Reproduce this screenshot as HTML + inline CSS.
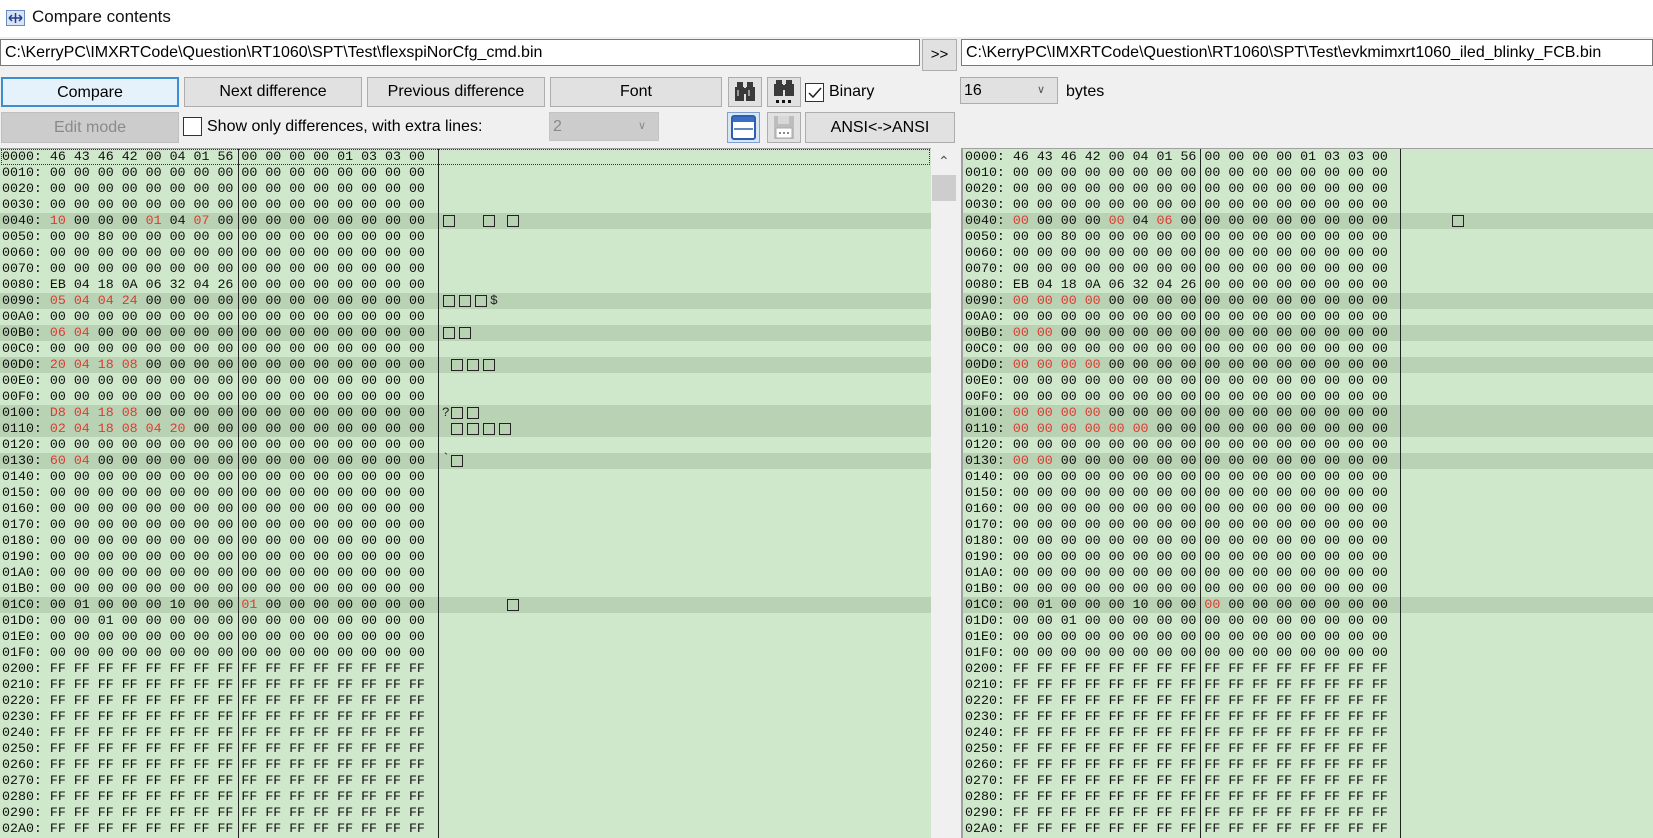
<!DOCTYPE html>
<html><head><meta charset="utf-8"><style>
*{margin:0;padding:0;box-sizing:border-box}
body{width:1653px;height:838px;overflow:hidden;background:#f0f0f0;font-family:"Liberation Sans",sans-serif;position:relative}
.a{position:absolute}
.title{left:0;top:0;width:1653px;height:37px;background:#fff}
.title span{position:absolute;left:32px;top:7px;font-size:17px;color:#111}
.inp{background:#fff;border:1px solid #7a7a7a;font-size:16px;line-height:25px;padding-left:4px;color:#000;white-space:nowrap;overflow:hidden}
.btn{background:#e1e1e1;border:1px solid #adadad;font-size:16px;color:#000;text-align:center}
.chk{width:19px;height:19px;border:1px solid #333;background:#fff}
.lbl{font-size:16px;color:#000;white-space:nowrap}
.panel{background:#cfe7ca;overflow:hidden}
.rows{position:absolute;left:0;top:0;font-family:"Liberation Mono",monospace;font-size:13.3px;color:#111}
.r{height:16px;line-height:16px;width:1000px;padding-left:2px;white-space:pre}
.h{background:#bad2b4}
.rd{color:#e03a30}
.sep{position:absolute;top:0;width:1px;height:700px;background:#222}
.box{position:absolute;width:12px;height:12px;border:1.3px solid #222}
.ch{position:absolute;font-family:"Liberation Mono",monospace;font-size:13px;color:#222}
</style></head><body>
<div class="a title">
<svg class="a" style="left:6px;top:10px" width="19" height="16" viewBox="0 0 19 16"><rect x="0.5" y="0.5" width="18" height="15" fill="#d8e4f4" stroke="#6a8ac0"/><path d="M3 8H16M3 8l3-3M3 8l3 3M16 8l-3-3M16 8l-3 3M9.5 3v10" stroke="#1f3f8a" stroke-width="1.5" fill="none"/></svg>
<span>Compare contents</span></div>

<div class="a inp" style="left:0;top:39px;width:920px;height:27px">C:\KerryPC\IMXRTCode\Question\RT1060\SPT\Test\flexspiNorCfg_cmd.bin</div>
<div class="a btn" style="left:922px;top:39px;width:35px;height:32px;line-height:30px;font-size:15px">&gt;&gt;</div>
<div class="a inp" style="left:961px;top:39px;width:692px;height:27px">C:\KerryPC\IMXRTCode\Question\RT1060\SPT\Test\evkmimxrt1060_iled_blinky_FCB.bin</div>

<div class="a btn" style="left:1px;top:77px;width:178px;height:30px;line-height:28px;border:2px solid #3c8ed0;background:#e5f1fb">Compare</div>
<div class="a btn" style="left:184px;top:77px;width:178px;height:30px;line-height:28px">Next difference</div>
<div class="a btn" style="left:367px;top:77px;width:178px;height:30px;line-height:28px">Previous difference</div>
<div class="a btn" style="left:550px;top:77px;width:172px;height:30px;line-height:28px">Font</div>
<div class="a btn" style="left:728px;top:77px;width:34px;height:30px"><svg width="32" height="28" viewBox="0 0 32 28"><g fill="#3a3a3a"><rect x="8" y="4" width="6" height="6"/><rect x="18" y="4" width="6" height="6"/><rect x="6" y="9" width="9" height="14"/><rect x="17" y="9" width="9" height="14"/><rect x="14" y="10" width="4" height="6"/></g><rect x="8" y="12" width="2" height="6" fill="#999"/><rect x="19" y="12" width="2" height="6" fill="#999"/></svg></div>
<div class="a btn" style="left:767px;top:77px;width:34px;height:30px"><svg width="32" height="28" viewBox="0 0 32 28"><g fill="#3a3a3a"><rect x="8" y="2" width="6" height="5"/><rect x="18" y="2" width="6" height="5"/><rect x="6" y="6" width="9" height="12"/><rect x="17" y="6" width="9" height="12"/><rect x="14" y="7" width="4" height="5"/></g><g fill="#111"><rect x="8" y="22" width="3" height="3"/><rect x="14" y="22" width="3" height="3"/><rect x="20" y="22" width="3" height="3"/></g></svg></div>
<div class="a chk" style="left:805px;top:83px"><svg width="17" height="17" viewBox="0 0 17 17"><path d="M3 9l4 4 8-9" stroke="#222" stroke-width="1.5" fill="none"/></svg></div>
<div class="a lbl" style="left:829px;top:83px">Binary</div>
<div class="a" style="left:960px;top:77px;width:98px;height:27px;background:#e1e1e1;border:1px solid #adadad;font-size:16px;line-height:25px;padding-left:3px">16<span style="position:absolute;left:76px;top:0;font-size:11px;color:#555">&#8744;</span></div>
<div class="a lbl" style="left:1066px;top:83px">bytes</div>

<div class="a btn" style="left:1px;top:112px;width:178px;height:31px;line-height:29px;color:#8a8a8a;background:#cccccc;border-color:#bfbfbf">Edit mode</div>
<div class="a chk" style="left:183px;top:117px"></div>
<div class="a lbl" style="left:207px;top:118px">Show only differences, with extra lines:</div>
<div class="a" style="left:549px;top:112px;width:110px;height:29px;background:#cccccc;border:1px solid #c4c4c4;font-size:16px;line-height:27px;padding-left:3px;color:#8a8a8a">2<span style="position:absolute;left:88px;top:0;font-size:11px">&#8744;</span></div>
<div class="a" style="left:727px;top:112px;width:33px;height:31px;background:#dbe6f4;border:1px solid #7d9fd1"><svg width="31" height="29" viewBox="0 0 31 29"><rect x="4" y="3" width="23" height="23" rx="2" fill="#fff" stroke="#2e5fae" stroke-width="2"/><rect x="5" y="4" width="21" height="5" fill="#3a6fc4"/><line x1="6" y1="16" x2="25" y2="16" stroke="#2e5fae" stroke-width="1.5"/></svg></div>
<div class="a btn" style="left:767px;top:112px;width:34px;height:31px"><svg width="32" height="29" viewBox="0 0 32 29"><rect x="6" y="3" width="20" height="23" fill="#bdbdbd"/><rect x="10" y="3" width="11" height="8" fill="#d8d8d8"/><rect x="8" y="15" width="16" height="10" fill="#fff" stroke="#aaa"/><g fill="#888"><rect x="11" y="19" width="2" height="2"/><rect x="15" y="19" width="2" height="2"/><rect x="19" y="19" width="2" height="2"/></g></svg></div>
<div class="a btn" style="left:805px;top:112px;width:150px;height:31px;line-height:29px">ANSI&lt;-&gt;ANSI</div>

<!-- left panel -->
<div class="a panel" style="left:0;top:148px;width:931px;height:690px;border-top:1px solid #a0a0a0">
<div class="rows"><div class="r">0000: 46 43 46 42 00 04 01 56 00 00 00 00 01 03 03 00</div><div class="r">0010: 00 00 00 00 00 00 00 00 00 00 00 00 00 00 00 00</div><div class="r">0020: 00 00 00 00 00 00 00 00 00 00 00 00 00 00 00 00</div><div class="r">0030: 00 00 00 00 00 00 00 00 00 00 00 00 00 00 00 00</div><div class="r h">0040: <span class="rd">10</span> 00 00 00 <span class="rd">01</span> 04 <span class="rd">07</span> 00 00 00 00 00 00 00 00 00</div><div class="r">0050: 00 00 80 00 00 00 00 00 00 00 00 00 00 00 00 00</div><div class="r">0060: 00 00 00 00 00 00 00 00 00 00 00 00 00 00 00 00</div><div class="r">0070: 00 00 00 00 00 00 00 00 00 00 00 00 00 00 00 00</div><div class="r">0080: EB 04 18 0A 06 32 04 26 00 00 00 00 00 00 00 00</div><div class="r h">0090: <span class="rd">05 04 04 24</span> 00 00 00 00 00 00 00 00 00 00 00 00</div><div class="r">00A0: 00 00 00 00 00 00 00 00 00 00 00 00 00 00 00 00</div><div class="r h">00B0: <span class="rd">06 04</span> 00 00 00 00 00 00 00 00 00 00 00 00 00 00</div><div class="r">00C0: 00 00 00 00 00 00 00 00 00 00 00 00 00 00 00 00</div><div class="r h">00D0: <span class="rd">20 04 18 08</span> 00 00 00 00 00 00 00 00 00 00 00 00</div><div class="r">00E0: 00 00 00 00 00 00 00 00 00 00 00 00 00 00 00 00</div><div class="r">00F0: 00 00 00 00 00 00 00 00 00 00 00 00 00 00 00 00</div><div class="r h">0100: <span class="rd">D8 04 18 08</span> 00 00 00 00 00 00 00 00 00 00 00 00</div><div class="r h">0110: <span class="rd">02 04 18 08 04 20</span> 00 00 00 00 00 00 00 00 00 00</div><div class="r">0120: 00 00 00 00 00 00 00 00 00 00 00 00 00 00 00 00</div><div class="r h">0130: <span class="rd">60 04</span> 00 00 00 00 00 00 00 00 00 00 00 00 00 00</div><div class="r">0140: 00 00 00 00 00 00 00 00 00 00 00 00 00 00 00 00</div><div class="r">0150: 00 00 00 00 00 00 00 00 00 00 00 00 00 00 00 00</div><div class="r">0160: 00 00 00 00 00 00 00 00 00 00 00 00 00 00 00 00</div><div class="r">0170: 00 00 00 00 00 00 00 00 00 00 00 00 00 00 00 00</div><div class="r">0180: 00 00 00 00 00 00 00 00 00 00 00 00 00 00 00 00</div><div class="r">0190: 00 00 00 00 00 00 00 00 00 00 00 00 00 00 00 00</div><div class="r">01A0: 00 00 00 00 00 00 00 00 00 00 00 00 00 00 00 00</div><div class="r">01B0: 00 00 00 00 00 00 00 00 00 00 00 00 00 00 00 00</div><div class="r h">01C0: 00 01 00 00 00 10 00 00 <span class="rd">01</span> 00 00 00 00 00 00 00</div><div class="r">01D0: 00 00 01 00 00 00 00 00 00 00 00 00 00 00 00 00</div><div class="r">01E0: 00 00 00 00 00 00 00 00 00 00 00 00 00 00 00 00</div><div class="r">01F0: 00 00 00 00 00 00 00 00 00 00 00 00 00 00 00 00</div><div class="r">0200: FF FF FF FF FF FF FF FF FF FF FF FF FF FF FF FF</div><div class="r">0210: FF FF FF FF FF FF FF FF FF FF FF FF FF FF FF FF</div><div class="r">0220: FF FF FF FF FF FF FF FF FF FF FF FF FF FF FF FF</div><div class="r">0230: FF FF FF FF FF FF FF FF FF FF FF FF FF FF FF FF</div><div class="r">0240: FF FF FF FF FF FF FF FF FF FF FF FF FF FF FF FF</div><div class="r">0250: FF FF FF FF FF FF FF FF FF FF FF FF FF FF FF FF</div><div class="r">0260: FF FF FF FF FF FF FF FF FF FF FF FF FF FF FF FF</div><div class="r">0270: FF FF FF FF FF FF FF FF FF FF FF FF FF FF FF FF</div><div class="r">0280: FF FF FF FF FF FF FF FF FF FF FF FF FF FF FF FF</div><div class="r">0290: FF FF FF FF FF FF FF FF FF FF FF FF FF FF FF FF</div><div class="r">02A0: FF FF FF FF FF FF FF FF FF FF FF FF FF FF FF FF</div></div>
<div class="sep" style="left:238px"></div>
<div class="sep" style="left:438px"></div>
<div class="a" style="left:1px;top:0;width:929px;height:16px;border:1px dotted #333"></div>
<div class="box" style="left:443px;top:66px"></div><div class="box" style="left:483px;top:66px"></div><div class="box" style="left:507px;top:66px"></div>
<div class="box" style="left:443px;top:146px"></div><div class="box" style="left:459px;top:146px"></div><div class="box" style="left:475px;top:146px"></div><div class="ch" style="left:490px;top:144px">$</div>
<div class="box" style="left:443px;top:178px"></div><div class="box" style="left:459px;top:178px"></div>
<div class="box" style="left:451px;top:210px"></div><div class="box" style="left:467px;top:210px"></div><div class="box" style="left:483px;top:210px"></div>
<div class="ch" style="left:442px;top:256px">?</div><div class="box" style="left:451px;top:258px"></div><div class="box" style="left:467px;top:258px"></div>
<div class="box" style="left:451px;top:274px"></div><div class="box" style="left:467px;top:274px"></div><div class="box" style="left:483px;top:274px"></div><div class="box" style="left:499px;top:274px"></div>
<div class="ch" style="left:442px;top:302px">`</div><div class="box" style="left:451px;top:306px"></div>
<div class="box" style="left:507px;top:450px"></div>
</div>
<div class="a" style="left:931px;top:148px;width:27px;height:690px;background:#f0f0f0"></div>
<div class="a" style="left:938px;top:153px;font-size:14px;color:#555">&#8963;</div>
<div class="a" style="left:932px;top:175px;width:24px;height:26px;background:#cdcdcd"></div>
<div class="a" style="left:961px;top:148px;width:2px;height:690px;background:#a0a0a0"></div>

<!-- right panel -->
<div class="a panel" style="left:963px;top:148px;width:690px;height:690px;border-top:1px solid #a0a0a0">
<div class="rows"><div class="r">0000: 46 43 46 42 00 04 01 56 00 00 00 00 01 03 03 00</div><div class="r">0010: 00 00 00 00 00 00 00 00 00 00 00 00 00 00 00 00</div><div class="r">0020: 00 00 00 00 00 00 00 00 00 00 00 00 00 00 00 00</div><div class="r">0030: 00 00 00 00 00 00 00 00 00 00 00 00 00 00 00 00</div><div class="r h">0040: <span class="rd">00</span> 00 00 00 <span class="rd">00</span> 04 <span class="rd">06</span> 00 00 00 00 00 00 00 00 00</div><div class="r">0050: 00 00 80 00 00 00 00 00 00 00 00 00 00 00 00 00</div><div class="r">0060: 00 00 00 00 00 00 00 00 00 00 00 00 00 00 00 00</div><div class="r">0070: 00 00 00 00 00 00 00 00 00 00 00 00 00 00 00 00</div><div class="r">0080: EB 04 18 0A 06 32 04 26 00 00 00 00 00 00 00 00</div><div class="r h">0090: <span class="rd">00 00 00 00</span> 00 00 00 00 00 00 00 00 00 00 00 00</div><div class="r">00A0: 00 00 00 00 00 00 00 00 00 00 00 00 00 00 00 00</div><div class="r h">00B0: <span class="rd">00 00</span> 00 00 00 00 00 00 00 00 00 00 00 00 00 00</div><div class="r">00C0: 00 00 00 00 00 00 00 00 00 00 00 00 00 00 00 00</div><div class="r h">00D0: <span class="rd">00 00 00 00</span> 00 00 00 00 00 00 00 00 00 00 00 00</div><div class="r">00E0: 00 00 00 00 00 00 00 00 00 00 00 00 00 00 00 00</div><div class="r">00F0: 00 00 00 00 00 00 00 00 00 00 00 00 00 00 00 00</div><div class="r h">0100: <span class="rd">00 00 00 00</span> 00 00 00 00 00 00 00 00 00 00 00 00</div><div class="r h">0110: <span class="rd">00 00 00 00 00 00</span> 00 00 00 00 00 00 00 00 00 00</div><div class="r">0120: 00 00 00 00 00 00 00 00 00 00 00 00 00 00 00 00</div><div class="r h">0130: <span class="rd">00 00</span> 00 00 00 00 00 00 00 00 00 00 00 00 00 00</div><div class="r">0140: 00 00 00 00 00 00 00 00 00 00 00 00 00 00 00 00</div><div class="r">0150: 00 00 00 00 00 00 00 00 00 00 00 00 00 00 00 00</div><div class="r">0160: 00 00 00 00 00 00 00 00 00 00 00 00 00 00 00 00</div><div class="r">0170: 00 00 00 00 00 00 00 00 00 00 00 00 00 00 00 00</div><div class="r">0180: 00 00 00 00 00 00 00 00 00 00 00 00 00 00 00 00</div><div class="r">0190: 00 00 00 00 00 00 00 00 00 00 00 00 00 00 00 00</div><div class="r">01A0: 00 00 00 00 00 00 00 00 00 00 00 00 00 00 00 00</div><div class="r">01B0: 00 00 00 00 00 00 00 00 00 00 00 00 00 00 00 00</div><div class="r h">01C0: 00 01 00 00 00 10 00 00 <span class="rd">00</span> 00 00 00 00 00 00 00</div><div class="r">01D0: 00 00 01 00 00 00 00 00 00 00 00 00 00 00 00 00</div><div class="r">01E0: 00 00 00 00 00 00 00 00 00 00 00 00 00 00 00 00</div><div class="r">01F0: 00 00 00 00 00 00 00 00 00 00 00 00 00 00 00 00</div><div class="r">0200: FF FF FF FF FF FF FF FF FF FF FF FF FF FF FF FF</div><div class="r">0210: FF FF FF FF FF FF FF FF FF FF FF FF FF FF FF FF</div><div class="r">0220: FF FF FF FF FF FF FF FF FF FF FF FF FF FF FF FF</div><div class="r">0230: FF FF FF FF FF FF FF FF FF FF FF FF FF FF FF FF</div><div class="r">0240: FF FF FF FF FF FF FF FF FF FF FF FF FF FF FF FF</div><div class="r">0250: FF FF FF FF FF FF FF FF FF FF FF FF FF FF FF FF</div><div class="r">0260: FF FF FF FF FF FF FF FF FF FF FF FF FF FF FF FF</div><div class="r">0270: FF FF FF FF FF FF FF FF FF FF FF FF FF FF FF FF</div><div class="r">0280: FF FF FF FF FF FF FF FF FF FF FF FF FF FF FF FF</div><div class="r">0290: FF FF FF FF FF FF FF FF FF FF FF FF FF FF FF FF</div><div class="r">02A0: FF FF FF FF FF FF FF FF FF FF FF FF FF FF FF FF</div></div>
<div class="sep" style="left:237px"></div>
<div class="sep" style="left:437px"></div>
<div class="box" style="left:489px;top:66px"></div>
</div>
</body></html>
